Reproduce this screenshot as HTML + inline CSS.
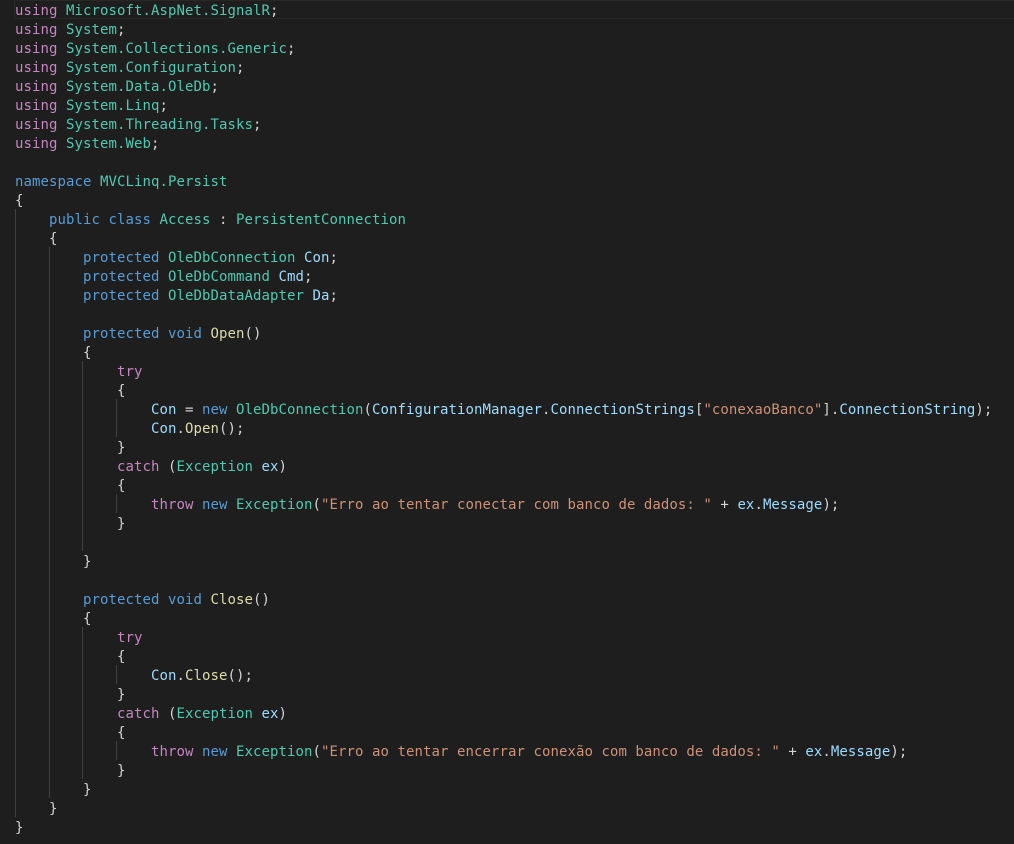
<!DOCTYPE html>
<html><head><meta charset="utf-8"><style>
html,body{margin:0;padding:0;background:#1e1e1e;width:1014px;height:844px;overflow:hidden}
#c{position:absolute;left:15px;top:2px;font-family:"DejaVu Sans Mono","Liberation Mono",monospace;font-size:14px;letter-spacing:0.07px;line-height:19px;color:#d4d4d4;white-space:pre}
.k{color:#c586c0}.b{color:#569cd6}.t{color:#4ec9b0}.v{color:#9cdcfe}.f{color:#dcdcaa}.s{color:#ce9178}
.g{position:absolute;width:1px;background:#404040}
#hl{position:absolute;left:14px;top:0;width:1000px;height:17px;border:1px solid #282828}
</style></head><body>
<div id="hl"></div>
<div class="g" style="left:15px;top:209px;height:608px"></div>
<div class="g" style="left:49px;top:247px;height:551px"></div>
<div class="g" style="left:82px;top:361px;height:190px"></div>
<div class="g" style="left:82px;top:627px;height:152px"></div>
<div class="g" style="left:116px;top:399px;height:38px"></div>
<div class="g" style="left:116px;top:494px;height:19px"></div>
<div class="g" style="left:116px;top:665px;height:19px"></div>
<div class="g" style="left:116px;top:741px;height:19px"></div>
<div id="c"><span class="k">using</span> <span class="t">Microsoft.AspNet.SignalR</span>;
<span class="k">using</span> <span class="t">System</span>;
<span class="k">using</span> <span class="t">System.Collections.Generic</span>;
<span class="k">using</span> <span class="t">System.Configuration</span>;
<span class="k">using</span> <span class="t">System.Data.OleDb</span>;
<span class="k">using</span> <span class="t">System.Linq</span>;
<span class="k">using</span> <span class="t">System.Threading.Tasks</span>;
<span class="k">using</span> <span class="t">System.Web</span>;

<span class="b">namespace</span> <span class="t">MVCLinq.Persist</span>
{
    <span class="b">public</span> <span class="b">class</span> <span class="t">Access</span> : <span class="t">PersistentConnection</span>
    {
        <span class="b">protected</span> <span class="t">OleDbConnection</span> <span class="v">Con</span>;
        <span class="b">protected</span> <span class="t">OleDbCommand</span> <span class="v">Cmd</span>;
        <span class="b">protected</span> <span class="t">OleDbDataAdapter</span> <span class="v">Da</span>;

        <span class="b">protected</span> <span class="b">void</span> <span class="f">Open</span>()
        {
            <span class="k">try</span>
            {
                <span class="v">Con</span> = <span class="b">new</span> <span class="t">OleDbConnection</span>(<span class="v">ConfigurationManager</span>.<span class="v">ConnectionStrings</span>[<span class="s">"conexaoBanco"</span>].<span class="v">ConnectionString</span>);
                <span class="v">Con</span>.<span class="f">Open</span>();
            }
            <span class="k">catch</span> (<span class="t">Exception</span> <span class="v">ex</span>)
            {
                <span class="k">throw</span> <span class="b">new</span> <span class="t">Exception</span>(<span class="s">"Erro ao tentar conectar com banco de dados: "</span> + <span class="v">ex</span>.<span class="v">Message</span>);
            }

        }

        <span class="b">protected</span> <span class="b">void</span> <span class="f">Close</span>()
        {
            <span class="k">try</span>
            {
                <span class="v">Con</span>.<span class="f">Close</span>();
            }
            <span class="k">catch</span> (<span class="t">Exception</span> <span class="v">ex</span>)
            {
                <span class="k">throw</span> <span class="b">new</span> <span class="t">Exception</span>(<span class="s">"Erro ao tentar encerrar conexão com banco de dados: "</span> + <span class="v">ex</span>.<span class="v">Message</span>);
            }
        }
    }
}</div>
</body></html>
